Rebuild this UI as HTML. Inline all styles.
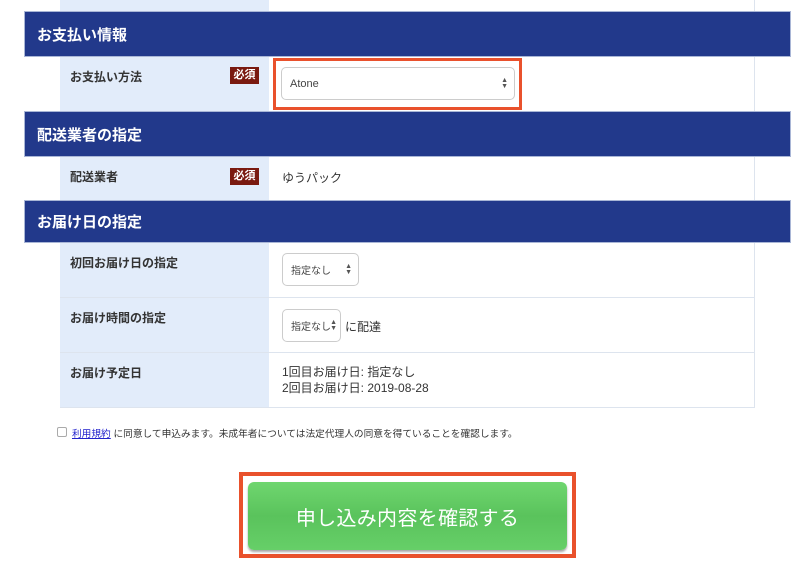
<!DOCTYPE html>
<html><head><meta charset="utf-8"><style>
*{margin:0;padding:0;box-sizing:border-box}
body{width:800px;height:563px;background:#fff;position:relative;overflow:hidden;font-family:"Liberation Sans","Noto Sans CJK JP",sans-serif;color:#333}
.a{position:absolute}
.bar{position:absolute;left:24px;width:767px;background:#22398b;border:1px solid #a9b6d6;color:#fff;font-weight:bold;font-size:15px;padding-left:12px;display:flex;align-items:center}
.lab{position:absolute;left:60px;width:209px;background:#e2ecfa}
.lt{position:absolute;left:70px;font-size:12px;font-weight:bold;color:#333}
.req{position:absolute;left:230px;width:29px;height:17px;background:#7a1a10;color:#fff;font-size:11px;font-weight:bold;text-align:center;line-height:17px}
.line{position:absolute;left:60px;width:695px;height:1px;background:#dde4ee}
.sel{position:absolute;border:1px solid #ccc;border-radius:5px;background:#fff;font-size:10px;color:#444;padding-left:8px;display:flex;align-items:center}
.arr{position:absolute;right:6px;top:50%;transform:translateY(-50%);font-size:7px;line-height:6px;color:#555}
.t{position:absolute;font-size:12px;color:#333}
</style></head><body>
<div class="lab" style="top:0;height:11px"></div>
<div class="a" style="left:754px;top:0;width:1px;height:408px;background:#dde4ee"></div>
<div class="bar" style="top:11px;height:46px">お支払い情報</div>
<div class="lab" style="top:57px;height:54px"></div>
<div class="lt" style="top:68px">お支払い方法</div>
<div class="req" style="top:67px">必須</div>
<div class="a" style="left:273px;top:58px;width:249px;height:52px;border:3px solid #e9512c"></div>
<div class="sel" style="left:281px;top:67px;width:234px;height:33px;font-size:11px">Atone<span class="arr">▲<br>▼</span></div>
<div class="bar" style="top:111px;height:46px">配送業者の指定</div>
<div class="lab" style="top:157px;height:43px"></div>
<div class="lt" style="top:168px">配送業者</div>
<div class="req" style="top:168px">必須</div>
<div class="t" style="left:282px;top:169px">ゆうパック</div>
<div class="bar" style="top:200px;height:43px">お届け日の指定</div>
<div class="lab" style="top:243px;height:165px"></div>
<div class="lt" style="top:254px">初回お届け日の指定</div>
<div class="sel" style="left:282px;top:253px;width:77px;height:33px">指定なし<span class="arr">▲<br>▼</span></div>
<div class="line" style="top:297px"></div>
<div class="lt" style="top:309px">お届け時間の指定</div>
<div class="sel" style="left:282px;top:309px;width:59px;height:33px">指定なし<span class="arr" style="right:3px">▲<br>▼</span></div>
<div class="t" style="left:345px;top:318px">に配達</div>
<div class="line" style="top:352px"></div>
<div class="lt" style="top:364px">お届け予定日</div>
<div class="t" style="left:282px;top:364px;line-height:16px">1回目お届け日: 指定なし<br>2回目お届け日: 2019-08-28</div>
<div class="line" style="top:407px"></div>
<div class="a" style="left:57px;top:427px;width:10px;height:10px;border:1px solid #aaa;border-radius:2px"></div>
<div class="t" style="left:72px;top:426px;font-size:9.7px;white-space:nowrap"><span style="color:#2222cc;text-decoration:underline">利用規約</span> に同意して申込みます。未成年者については法定代理人の同意を得ていることを確認します。</div>
<div class="a" style="left:239px;top:472px;width:337px;height:86px;border:4px solid #e9512c"></div>
<div class="a" style="left:248px;top:482px;width:319px;height:68px;border-radius:6px;background:linear-gradient(#6fd66f,#5ac35c 50%,#66cf68);box-shadow:0 2px 2px rgba(0,0,0,.35);color:#fff;font-size:20px;display:flex;align-items:center;justify-content:center;letter-spacing:0.3px">申し込み内容を確認する</div>
</body></html>
